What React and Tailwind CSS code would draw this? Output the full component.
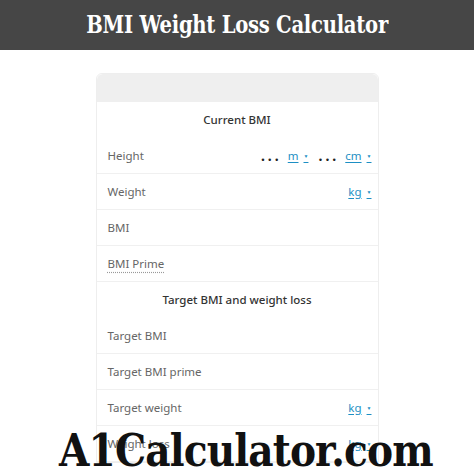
import { useState } from "react";

function Caret() {
  return <span className="ml-[5px] align-middle text-[5px] leading-none">▼</span>;
}

function Unit({ label }) {
  return (
    <span className="text-[11.5px] text-[#1d8fc4] underline decoration-[#1d8fc4] underline-offset-2">
      {label}
      <Caret />
    </span>
  );
}

function Dots() {
  return <span className="text-[14px] font-bold tracking-[3px] text-[#222]">...</span>;
}

function Row({ label, dotted, children, border = true }) {
  return (
    <div className={`flex h-[36px] items-center justify-between pl-[11px] pr-[6px] ${border ? "border-b border-[#f0f0f0]" : ""}`}>
      <span
        className={`text-[11.5px] text-[#666] ${dotted ? "underline decoration-dotted decoration-[#999] underline-offset-4" : ""}`}
      >
        {label}
      </span>
      <div className="flex items-center gap-[10px]">{children}</div>
    </div>
  );
}

function Heading({ children }) {
  return (
    <div className="flex h-[36px] items-center justify-center text-[11.5px] font-medium text-[#333]">{children}</div>
  );
}

export default function App() {
  const [open] = useState(false);

  return (
    <div className="relative h-[474px] w-[474px] overflow-hidden bg-white" style={{ fontFamily: "'Noto Sans', sans-serif" }}>
      <header className="flex h-[50px] items-center justify-center bg-[#464646]">
        <h1
          className="scale-x-[0.815] text-[24px] font-bold tracking-[-0.3px] whitespace-nowrap text-white"
          style={{ fontFamily: "'DejaVu Serif', serif" }}
        >
          BMI Weight Loss Calculator
        </h1>
      </header>

      <div className="mx-auto mt-[23px] w-[283px] rounded-t-[6px] border border-[#eeeeee]">
        <div className="h-[28px] rounded-t-[6px] bg-[#efefef]" />
        <Heading>Current BMI</Heading>
        <Row label="Height">
          <span className="flex items-center gap-[6px]">
            <Dots />
            <Unit label="m" />
          </span>
          <span className="flex items-center gap-[6px]">
            <Dots />
            <Unit label="cm" />
          </span>
        </Row>
        <Row label="Weight">
          <Unit label="kg" />
        </Row>
        <Row label="BMI" />
        <Row label="BMI Prime" dotted />
        <Heading>Target BMI and weight loss</Heading>
        <Row label="Target BMI" />
        <Row label="Target BMI prime" />
        <Row label="Target weight">
          <Unit label="kg" />
        </Row>
        <Row label="Weight loss">
          <Unit label="kg" />
        </Row>
        {open ? <Row label="" /> : null}
      </div>

      <div className="absolute left-0 right-0 top-[429px] flex justify-center pl-[18px]">
        <span
          className="scale-x-[0.89] text-[44px] font-bold leading-none tracking-[-1px] whitespace-nowrap text-[#111]"
          style={{ fontFamily: "'DejaVu Serif', serif" }}
        >
          A1Calculator.com
        </span>
      </div>
    </div>
  );
}
